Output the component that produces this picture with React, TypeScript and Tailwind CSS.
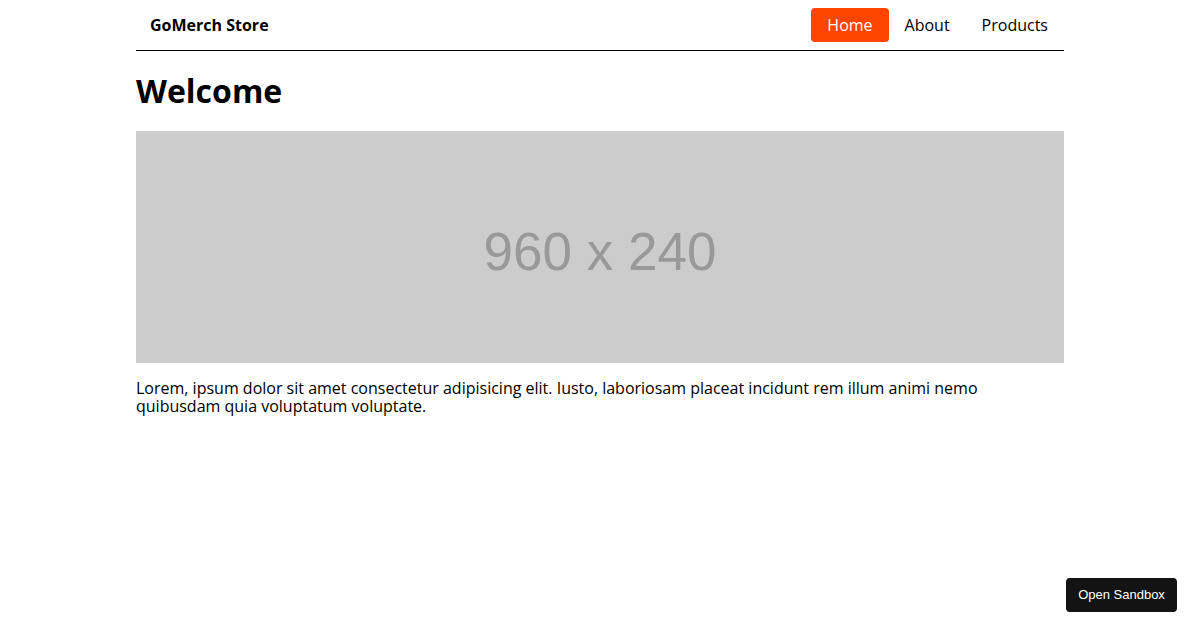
import React from "react";

export default function App() {
  return (
    <div
      className="min-h-[630px] bg-white text-black"
      style={{ fontFamily: '"Open Sans", "Noto Sans", sans-serif' }}
    >
      <div className="mx-auto w-[928px]">
        <header className="flex h-[51px] items-center justify-between border-b border-black py-2">
          <div className="pl-[14px] text-[16px] font-bold leading-[22px]">GoMerch Store</div>
          <nav className="flex items-center">
            <a className="flex h-[34px] items-center rounded-[4px] bg-[#ff4500] px-4 text-[16px] text-white">
              Home
            </a>
            <a className="flex h-[34px] items-center px-4 text-[16px]">About</a>
            <a className="flex h-[34px] items-center px-4 text-[16px]">Products</a>
          </nav>
        </header>
        <h1 className="mt-[18px] text-[32px] font-bold leading-[44px]">Welcome</h1>
        <div className="mt-[18px] flex h-[232px] w-full items-center justify-center bg-[#cccccc]">
          <span
            className="mt-[10px] text-[53px] leading-[62px] text-[#999999]"
            style={{ fontFamily: '"Liberation Sans", Arial, sans-serif' }}
          >
            960 x 240
          </span>
        </div>
        <p className="mt-4 text-[16px] leading-[18px]">
          Lorem, ipsum dolor sit amet consectetur adipisicing elit. Iusto, laboriosam placeat incidunt rem illum
          animi nemo quibusdam quia voluptatum voluptate.
        </p>
      </div>
      <button
        className="fixed bottom-[18px] right-[23px] flex h-[34px] w-[111px] items-center justify-center rounded-[4px] bg-[#131313] text-[13px] text-white"
        style={{ fontFamily: '"Liberation Sans", Arial, sans-serif' }}
      >
        Open Sandbox
      </button>
    </div>
  );
}
